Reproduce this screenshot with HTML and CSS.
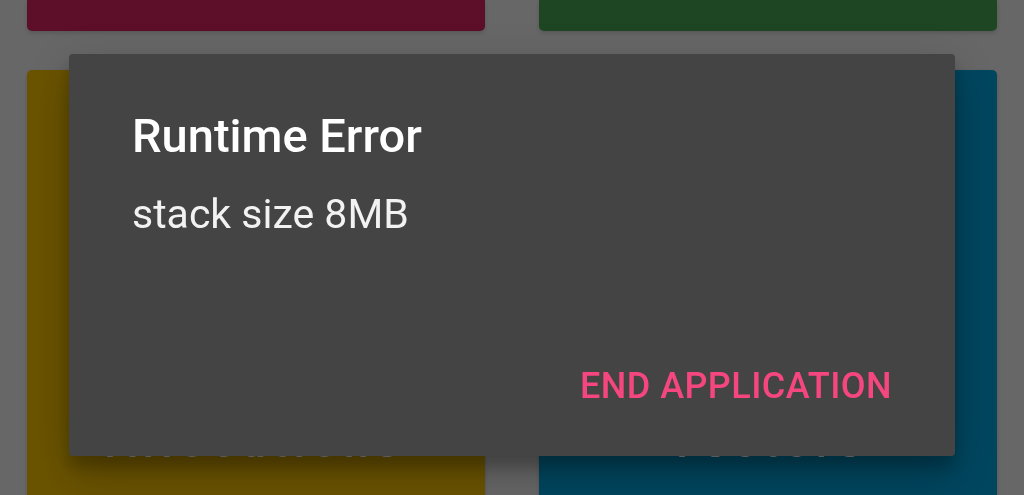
FILE: index.html
```html
<!DOCTYPE html>
<html>
<head>
<meta charset="utf-8">
<link rel="stylesheet" href="styles.css">
</head>
<body>
<div class="grid">
  <div class="tile tile-red"></div>
  <div class="tile tile-green"></div>
  <div class="tile tile-yellow"><span class="tile-label">Allocations</span></div>
  <div class="tile tile-blue"><span class="tile-label">Vectors</span></div>
</div>
<div class="dialog">
  <div class="dialog-title">Runtime Error</div>
  <div class="dialog-body">stack size 8MB</div>
  <div class="dialog-actions"><span class="btn">END APPLICATION</span></div>
</div>
</body>
</html>
```
FILE: styles.css
```css
html, body {
  margin: 0;
  padding: 0;
  width: 1024px;
  height: 495px;
  overflow: hidden;
  background: #676767;
  font-family: Roboto, "Noto Sans", sans-serif;
}
.grid {
  display: grid;
  grid-template-columns: 458px 458px;
  grid-template-rows: 31px 440px;
  column-gap: 54px;
  row-gap: 39px;
  padding-left: 27px;
}
.tile {
  border-radius: 0 0 5px 5px;
  box-shadow: 0 2px 4px rgba(0,0,0,0.15);
  display: flex;
  justify-content: center;
  align-items: flex-start;
}
.tile-yellow, .tile-blue { border-radius: 5px; }
.tile-red { background: #5d0e29; }
.tile-green { background: #1f4623; }
.tile-yellow { background: #6a5300; }
.tile-blue { background: #00465f; }
.tile-label {
  margin-top: 350px;
  font-size: 44px;
  line-height: 44px;
  font-weight: 500;
  letter-spacing: 0.16em;
  color: #8a8a8a;
}
.dialog {
  position: fixed;
  left: 69px;
  top: 54px;
  width: 886px;
  height: 402px;
  box-sizing: border-box;
  background: #444444;
  border-radius: 4px;
  padding: 58px 63px 53px 63px;
  display: flex;
  flex-direction: column;
  box-shadow: 0 11px 15px rgba(0,0,0,0.2), 0 24px 38px rgba(0,0,0,0.14), 0 9px 46px rgba(0,0,0,0.12);
}
.dialog-title {
  font-size: 47px;
  line-height: 47px;
  font-weight: 500;
  color: #ffffff;
}
.dialog-body {
  margin-top: 35px;
  font-size: 41px;
  line-height: 41px;
  color: #f2f2f2;
}
.dialog-actions {
  margin-top: auto;
  display: flex;
  justify-content: flex-end;
}
.btn {
  font-size: 36px;
  line-height: 34px;
  font-weight: 500;
  color: #f5467f;
  letter-spacing: 0.012em;
}
```
